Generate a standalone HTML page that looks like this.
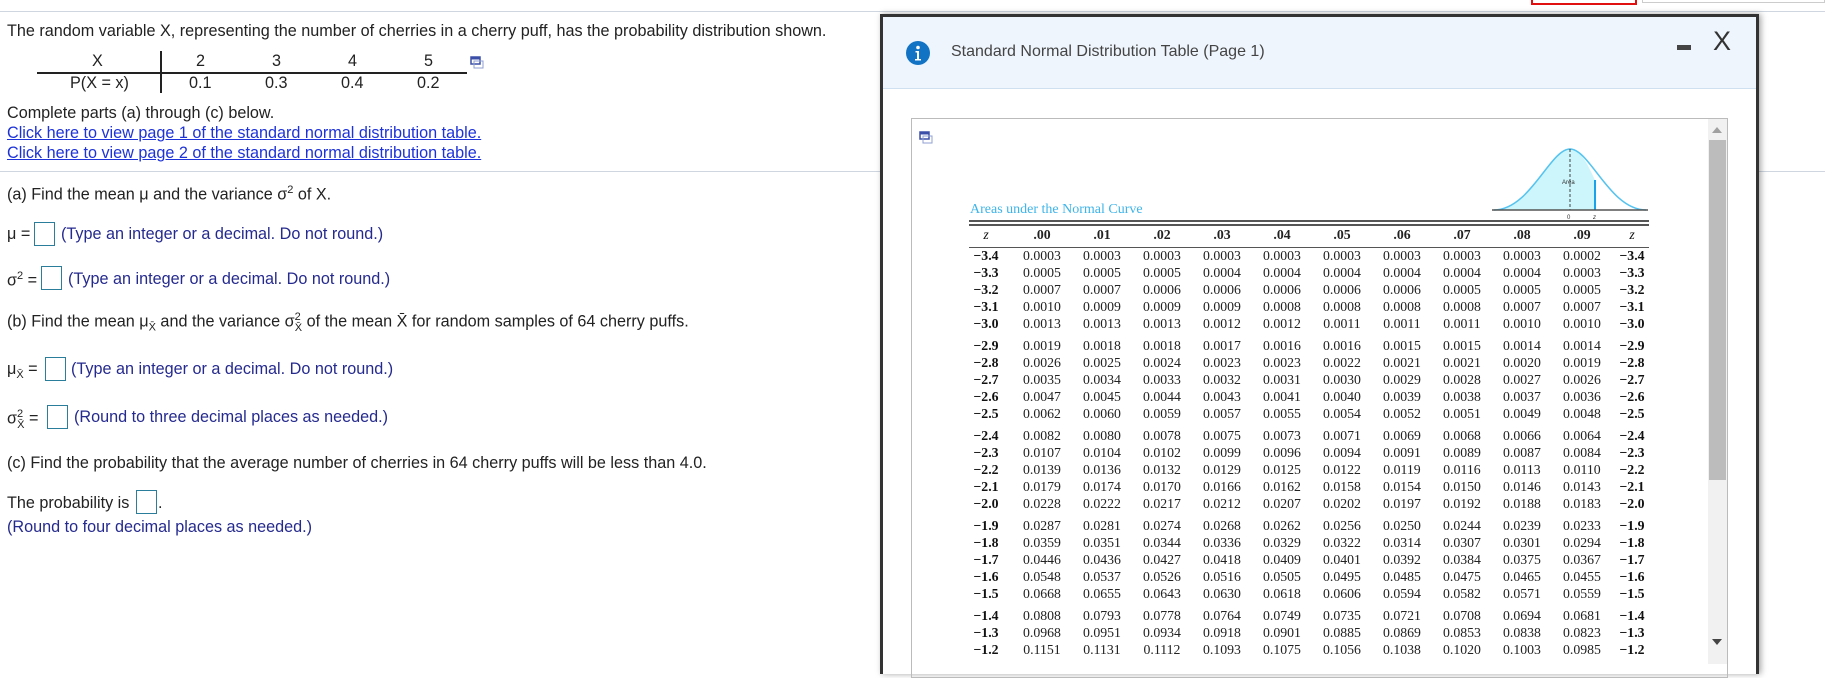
<!DOCTYPE html>
<html><head><meta charset="utf-8">
<style>
*{margin:0;padding:0;box-sizing:border-box}
body{width:1825px;height:664px;overflow:hidden;background:#fff;position:relative;font-family:"Liberation Sans",Arial,sans-serif;font-size:16.2px;color:#222}
.a{position:absolute;white-space:nowrap}
.ins{color:#252a8e}
.lnk{color:#1d32d8;text-decoration:underline}
.box{position:absolute;width:21px;height:24px;border:1.5px solid #2a7e9c;background:#fff}
.t{position:absolute;font-family:"Liberation Serif",serif;font-size:13.5px;color:#222;white-space:nowrap}
.r{position:absolute;left:969px;height:17px;width:690px;font-family:"Liberation Serif",serif;font-size:13.8px;color:#222}
.r span{position:absolute;top:0;width:60px;text-align:center}
.r b{position:absolute;top:0;text-align:center;font-weight:bold;color:#111}
</style></head><body>
<div class="a" style="left:0;top:11px;width:1825px;height:1px;background:#cfd6e0"></div>
<div class="a" style="left:1531px;top:0;width:106px;height:5px;border:2px solid #e01010;border-top:none"></div>
<div class="a" style="left:1642px;top:0;width:183px;height:3px;border:1px solid #ccc;border-top:none"></div>

<div class="a" style="left:7px;top:22px">The random variable X, representing the number of cherries in a cherry puff, has the probability distribution shown.</div>
<div class="a" style="left:37px;top:72px;width:430px;height:1.5px;background:#222"></div>
<div class="a" style="left:160px;top:51px;width:1.5px;height:42px;background:#222"></div>
<div class="a" style="left:92px;top:52px">X</div>
<div class="a" style="left:196px;top:52px">2</div>
<div class="a" style="left:272px;top:52px">3</div>
<div class="a" style="left:348px;top:52px">4</div>
<div class="a" style="left:424px;top:52px">5</div>
<div class="a" style="left:70px;top:74px">P(X = x)</div>
<div class="a" style="left:189px;top:74px">0.1</div>
<div class="a" style="left:265px;top:74px">0.3</div>
<div class="a" style="left:341px;top:74px">0.4</div>
<div class="a" style="left:417px;top:74px">0.2</div>
<svg class="a" style="left:470px;top:56px" width="14" height="14"><rect x="1" y="1" width="9" height="7" fill="none" stroke="#3b4fa8" stroke-width="1.5"/><rect x="1" y="1" width="9" height="2.5" fill="#3b4fa8"/><rect x="4" y="5" width="9" height="7" fill="none" stroke="#8fa0d0" stroke-width="1"/></svg>

<div class="a" style="left:7px;top:104px">Complete parts (a) through (c) below.</div>
<div class="a lnk" style="left:7px;top:124px">Click here to view page 1 of the standard normal distribution table.</div>
<div class="a lnk" style="left:7px;top:144px">Click here to view page 2 of the standard normal distribution table.</div>
<div class="a" style="left:0;top:171px;width:1825px;height:1px;background:#cfd6e0"></div>

<div class="a" style="left:7px;top:184px">(a) Find the mean μ and the variance σ<sup style="font-size:11px">2</sup> of X.</div>
<div class="a" style="left:7px;top:225px">μ =</div><div class="box" style="left:34px;top:222px"></div>
<div class="a ins" style="left:61px;top:225px">(Type an integer or a decimal. Do not round.)</div>
<div class="a" style="left:7px;top:270px">σ<sup style="font-size:11px">2</sup> =</div><div class="box" style="left:41px;top:266px"></div>
<div class="a ins" style="left:68px;top:270px">(Type an integer or a decimal. Do not round.)</div>
<div class="a" style="left:7px;top:311px">(b) Find the mean μ<sub style="font-size:11px">X̄</sub> and the variance σ<sup style="font-size:11px">2</sup><sub style="font-size:11px;margin-left:-6px">X̄</sub> of the mean X̄ for random samples of 64 cherry puffs.</div>
<div class="a" style="left:7px;top:360px">μ<sub style="font-size:11px">X̄</sub> =</div><div class="box" style="left:45px;top:357px"></div>
<div class="a ins" style="left:71px;top:360px">(Type an integer or a decimal. Do not round.)</div>
<div class="a" style="left:7px;top:408px">σ<sup style="font-size:11px">2</sup><sub style="font-size:11px;margin-left:-6px">X̄</sub> =</div><div class="box" style="left:47px;top:405px"></div>
<div class="a ins" style="left:74px;top:408px">(Round to three decimal places as needed.)</div>
<div class="a" style="left:7px;top:454px">(c) Find the probability that the average number of cherries in 64 cherry puffs will be less than 4.0.</div>
<div class="a" style="left:7px;top:494px">The probability is</div><div class="box" style="left:136px;top:490px"></div><div class="a" style="left:158px;top:494px">.</div>
<div class="a ins" style="left:7px;top:518px">(Round to four decimal places as needed.)</div>

<!-- modal -->
<div class="a" style="left:880px;top:14px;width:879px;height:660px;border:3px solid #333;border-bottom:none;background:#fff;box-shadow:2px 0 6px rgba(0,0,0,.35)"></div>
<div class="a" style="left:883px;top:17px;width:873px;height:72px;background:#eef5fd;border-bottom:1px solid #cfe0f0"></div>
<svg class="a" style="left:906px;top:41px" width="24" height="24"><circle cx="12" cy="12" r="12" fill="#1273c4"/><circle cx="12" cy="6.5" r="1.8" fill="#fff"/><path d="M9.5 10h3.5v8h2v1.5h-6v-1.5h2v-6.5h-1.5z" fill="#fff"/></svg>
<div class="a" style="left:951px;top:43px;font-size:16px;color:#444">Standard Normal Distribution Table (Page 1)</div>
<div class="a" style="left:1677px;top:45px;width:14px;height:5px;background:#444"></div>
<div class="a" style="left:1713px;top:26px;font-size:27px;color:#333">X</div>

<div class="a" style="left:911px;top:118px;width:817px;height:560px;border:1px solid #bbb"></div>
<svg class="a" style="left:919px;top:131px" width="14" height="14"><rect x="1" y="1" width="9" height="7" fill="none" stroke="#3b4fa8" stroke-width="1.5"/><rect x="1" y="1" width="9" height="2.5" fill="#3b4fa8"/><rect x="4" y="5" width="9" height="7" fill="none" stroke="#8fa0d0" stroke-width="1"/></svg>
<div class="a" style="left:1708px;top:119px;width:19px;height:545px;background:#f1f1f1"></div>
<div class="a" style="left:1709px;top:140px;width:17px;height:340px;background:#bcbcbc"></div>
<svg class="a" style="left:1712px;top:126px" width="10" height="8"><path d="M0 7L5 1L10 7z" fill="#a0a0a0"/></svg>
<svg class="a" style="left:1712px;top:638px" width="10" height="8"><path d="M0 1L5 7L10 1z" fill="#444"/></svg>

<svg class="a" style="left:1490px;top:140px" width="160" height="80">
<path d="M4 70 C40 70 60 9 80 9 C92 9 100 30 105 40 L105 70Z" fill="#ccf6fb"/>
<path d="M4 70 C40 70 60 9 80 9 C100 9 120 70 156 70" fill="none" stroke="#55c3ef" stroke-width="1.5"/>
<line x1="80" y1="9" x2="80" y2="70" stroke="#444" stroke-dasharray="3,2"/>
<line x1="105" y1="40" x2="105" y2="70" stroke="#1aa3ea" stroke-width="2"/>
<line x1="2" y1="70" x2="158" y2="70" stroke="#555" stroke-width="1.5"/>
<text x="72" y="44" font-size="6" font-family="Liberation Sans" fill="#333">Area</text>
<text x="77" y="79" font-size="6" fill="#333">0</text><text x="103" y="79" font-size="6" fill="#333" font-style="italic">z</text>
</svg>
<div class="t" style="left:970px;top:202px;color:#3db4ea;font-size:14px">Areas under the Normal Curve</div>
<div class="a" style="left:969px;top:220px;width:680px;height:2px;background:#555"></div>
<div class="a" style="left:969px;top:224px;width:680px;height:1.5px;background:#555"></div>
<div class="a" style="left:969px;top:247px;width:680px;height:1px;background:#555"></div>
<div class="r" style="top:227px"><b style="left:0;width:34px;font-style:italic;font-weight:normal">z</b><span style="left:43px;font-weight:bold">.00</span><span style="left:103px;font-weight:bold">.01</span><span style="left:163px;font-weight:bold">.02</span><span style="left:223px;font-weight:bold">.03</span><span style="left:283px;font-weight:bold">.04</span><span style="left:343px;font-weight:bold">.05</span><span style="left:403px;font-weight:bold">.06</span><span style="left:463px;font-weight:bold">.07</span><span style="left:523px;font-weight:bold">.08</span><span style="left:583px;font-weight:bold">.09</span><b style="left:642px;width:42px;font-style:italic;font-weight:normal">z</b></div>
<div id="rows"></div>
<script>
var d=[
["−3.4","0.0003 0.0003 0.0003 0.0003 0.0003 0.0003 0.0003 0.0003 0.0003 0.0002"],
["−3.3","0.0005 0.0005 0.0005 0.0004 0.0004 0.0004 0.0004 0.0004 0.0004 0.0003"],
["−3.2","0.0007 0.0007 0.0006 0.0006 0.0006 0.0006 0.0006 0.0005 0.0005 0.0005"],
["−3.1","0.0010 0.0009 0.0009 0.0009 0.0008 0.0008 0.0008 0.0008 0.0007 0.0007"],
["−3.0","0.0013 0.0013 0.0013 0.0012 0.0012 0.0011 0.0011 0.0011 0.0010 0.0010"],
["−2.9","0.0019 0.0018 0.0018 0.0017 0.0016 0.0016 0.0015 0.0015 0.0014 0.0014"],
["−2.8","0.0026 0.0025 0.0024 0.0023 0.0023 0.0022 0.0021 0.0021 0.0020 0.0019"],
["−2.7","0.0035 0.0034 0.0033 0.0032 0.0031 0.0030 0.0029 0.0028 0.0027 0.0026"],
["−2.6","0.0047 0.0045 0.0044 0.0043 0.0041 0.0040 0.0039 0.0038 0.0037 0.0036"],
["−2.5","0.0062 0.0060 0.0059 0.0057 0.0055 0.0054 0.0052 0.0051 0.0049 0.0048"],
["−2.4","0.0082 0.0080 0.0078 0.0075 0.0073 0.0071 0.0069 0.0068 0.0066 0.0064"],
["−2.3","0.0107 0.0104 0.0102 0.0099 0.0096 0.0094 0.0091 0.0089 0.0087 0.0084"],
["−2.2","0.0139 0.0136 0.0132 0.0129 0.0125 0.0122 0.0119 0.0116 0.0113 0.0110"],
["−2.1","0.0179 0.0174 0.0170 0.0166 0.0162 0.0158 0.0154 0.0150 0.0146 0.0143"],
["−2.0","0.0228 0.0222 0.0217 0.0212 0.0207 0.0202 0.0197 0.0192 0.0188 0.0183"],
["−1.9","0.0287 0.0281 0.0274 0.0268 0.0262 0.0256 0.0250 0.0244 0.0239 0.0233"],
["−1.8","0.0359 0.0351 0.0344 0.0336 0.0329 0.0322 0.0314 0.0307 0.0301 0.0294"],
["−1.7","0.0446 0.0436 0.0427 0.0418 0.0409 0.0401 0.0392 0.0384 0.0375 0.0367"],
["−1.6","0.0548 0.0537 0.0526 0.0516 0.0505 0.0495 0.0485 0.0475 0.0465 0.0455"],
["−1.5","0.0668 0.0655 0.0643 0.0630 0.0618 0.0606 0.0594 0.0582 0.0571 0.0559"],
["−1.4","0.0808 0.0793 0.0778 0.0764 0.0749 0.0735 0.0721 0.0708 0.0694 0.0681"],
["−1.3","0.0968 0.0951 0.0934 0.0918 0.0901 0.0885 0.0869 0.0853 0.0838 0.0823"],
["−1.2","0.1151 0.1131 0.1112 0.1093 0.1075 0.1056 0.1038 0.1020 0.1003 0.0985"]];
var h="";
d.forEach(function(r,i){var top=248+i*17+Math.floor(i/5)*5;var v=r[1].split(" ");
h+='<div class="r" style="top:'+top+'px"><b style="left:0;width:34px">'+r[0]+'</b>';
v.forEach(function(x,k){h+='<span style="left:'+(43+k*60)+'px">'+x+'</span>';});
h+='<b style="left:642px;width:42px">'+r[0]+'</b></div>';});
document.getElementById("rows").innerHTML=h;
</script>
</body></html>
